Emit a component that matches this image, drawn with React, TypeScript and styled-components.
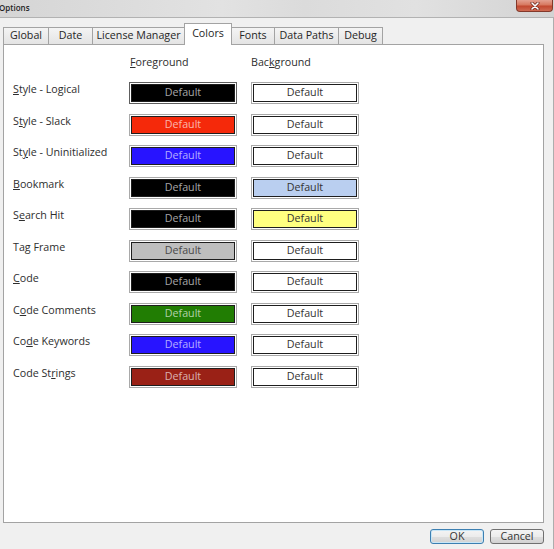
import React from "react";
import styled, { createGlobalStyle, css } from "styled-components";

const Global = createGlobalStyle`
  html, body { margin: 0; padding: 0; background: #f0f0f0; }
  body { font-family: "Open Sans", "Noto Sans", sans-serif; }
  * { box-sizing: border-box; }
`;

const Window = styled.div`
  width: 554px;
  height: 549px;
  display: flex;
  flex-direction: column;
  background: #f0f0f0;
  overflow: hidden;
`;

const TitleBar = styled.div`
  height: 18px;
  flex: none;
  display: flex;
  justify-content: space-between;
  align-items: flex-start;
  border-bottom: 1px solid #b2b2b2;
  background: linear-gradient(90deg, #d5d5d5 0%, #e2e2e2 40%, #dbdbdb 55%, #e1e1e1 75%, #d3d3d3 100%);
`;

const Title = styled.span`
  margin-left: -1px;
  font-size: 8px;
  font-weight: 600;
  line-height: 15px;
  color: #1f1f1f;
`;

const CloseButton = styled.div`
  width: 37px;
  height: 12px;
  margin-right: 1px;
  display: flex;
  align-items: center;
  justify-content: center;
  border: 1px solid #83382a;
  border-top: none;
  border-radius: 0 0 4px 4px;
  background: linear-gradient(#e4a090 0%, #d7785f 45%, #c2482f 55%, #cf6a52 100%);
`;

const Body = styled.div`
  flex: 1;
  display: flex;
  flex-direction: column;
  padding: 5px 9px 0 3px;
  border-right: 1px solid #adadad;
`;

const TabStrip = styled.div`
  height: 21px;
  display: flex;
  align-items: flex-end;
`;

const Tab = styled.div<{ $w: number; $active?: boolean }>`
  width: ${(p) => p.$w}px;
  height: 17px;
  margin-left: -1px;
  &:first-child { margin-left: 0; }
  border: 1px solid #a3a3a3;
  border-bottom: none;
  background: linear-gradient(#f4f4f4, #e4e4e4);
  font-size: 10.7px;
  line-height: 14px;
  text-align: center;
  color: #262626;
  white-space: nowrap;
  ${(p) =>
    p.$active &&
    css`
      height: 22px;
      margin-bottom: -1px;
      padding-top: 2px;
      background: #ffffff;
      position: relative;
      z-index: 1;
    `}
`;

const Panel = styled.div`
  height: 479px;
  border: 1px solid #a3a3a3;
  background: #ffffff;
  padding: 10px 0 0 9px;
`;

const Grid = styled.div`
  display: grid;
  grid-template-columns: 116px 122px 108px;
  grid-template-rows: 27px repeat(5, 32px 31px);
  align-items: start;
`;

const Header = styled.div<{ $indent?: number }>`
  padding-left: ${(p) => p.$indent ?? 0}px;
  font-size: 10.7px;
  line-height: 14px;
  color: #2e2e2e;
`;

const Label = styled.div`
  font-size: 10.7px;
  line-height: 14px;
  color: #2e2e2e;
  white-space: nowrap;
`;

const U = styled.span`
  text-decoration: underline;
  text-underline-offset: 1px;
`;

const ColorButton = styled.div<{ $focused?: boolean }>`
  width: 108px;
  height: 22px;
  padding: 1px;
  border: 1px solid ${(p) => (p.$focused ? "#5e5e5e" : "#a9a9a9")};
  background: #ffffff;
`;

const ColorFill = styled.div<{ $bg: string; $ink: string }>`
  height: 100%;
  border: 1px solid #1e1e1e;
  background: ${(p) => p.$bg};
  color: ${(p) => p.$ink};
  font-size: 10.7px;
  line-height: 14px;
  text-align: center;
`;

const Footer = styled.div`
  display: flex;
  justify-content: flex-end;
  gap: 6px;
  padding-top: 6px;
`;

const DialogButton = styled.div<{ $default?: boolean }>`
  width: 54px;
  height: 15px;
  border: 1px solid ${(p) => (p.$default ? "#3c7fb1" : "#707070")};
  border-radius: 3px;
  background: linear-gradient(#f4f4f4 0%, #ececec 50%, #dfdfdf 51%, #d2d2d2 100%);
  font-size: 10.7px;
  line-height: 13px;
  text-align: center;
  color: #333333;
  ${(p) => p.$default && css`box-shadow: inset 0 0 0 1px #c8e6f7;`}
`;

const tabs: { label: string; w: number; active?: boolean }[] = [
  { label: "Global", w: 46 },
  { label: "Date", w: 45 },
  { label: "License Manager", w: 93 },
  { label: "Colors", w: 48, active: true },
  { label: "Fonts", w: 44 },
  { label: "Data Paths", w: 65 },
  { label: "Debug", w: 45 },
];

const LIGHT_INK = "rgba(255,255,255,0.66)";
const DARK_INK = "#333333";

type Row = {
  label: [string, string, string];
  fg: string;
  fgInk: string;
  bg: string;
};

const rows: Row[] = [
  { label: ["", "S", "tyle - Logical"], fg: "#000000", fgInk: LIGHT_INK, bg: "#ffffff" },
  { label: ["S", "t", "yle - Slack"], fg: "#f5290a", fgInk: LIGHT_INK, bg: "#ffffff" },
  { label: ["St", "y", "le - Uninitialized"], fg: "#2814ff", fgInk: LIGHT_INK, bg: "#ffffff" },
  { label: ["", "B", "ookmark"], fg: "#000000", fgInk: LIGHT_INK, bg: "#bacff0" },
  { label: ["S", "e", "arch Hit"], fg: "#000000", fgInk: LIGHT_INK, bg: "#ffff80" },
  { label: ["Ta", "g", " Frame"], fg: "#bebebe", fgInk: "#4a4a4a", bg: "#ffffff" },
  { label: ["", "C", "ode"], fg: "#000000", fgInk: LIGHT_INK, bg: "#ffffff" },
  { label: ["C", "o", "de Comments"], fg: "#217d03", fgInk: LIGHT_INK, bg: "#ffffff" },
  { label: ["Co", "d", "e Keywords"], fg: "#2814ff", fgInk: LIGHT_INK, bg: "#ffffff" },
  { label: ["Code St", "r", "ings"], fg: "#9a2116", fgInk: LIGHT_INK, bg: "#ffffff" },
];

export default function App() {
  return (
    <>
      <Global />
      <Window>
        <TitleBar>
          <Title>Options</Title>
          <CloseButton>
            <svg width="10" height="8" viewBox="0 0 10 8">
              <path d="M2 1 L8 7 M8 1 L2 7" stroke="#6b2418" strokeWidth="3" strokeLinecap="round" />
              <path d="M2 1 L8 7 M8 1 L2 7" stroke="#ffffff" strokeWidth="1.6" strokeLinecap="round" />
            </svg>
          </CloseButton>
        </TitleBar>
        <Body>
          <TabStrip>
            {tabs.map((t) => (
              <Tab key={t.label} $w={t.w} $active={t.active}>
                {t.label}
              </Tab>
            ))}
          </TabStrip>
          <Panel>
            <Grid>
              <div />
              <Header $indent={1}>
                <U>F</U>oreground
              </Header>
              <Header>
                Bac<U>k</U>ground
              </Header>
              {rows.map((r, i) => (
                <React.Fragment key={i}>
                  <Label>
                    {r.label[0]}
                    <U>{r.label[1]}</U>
                    {r.label[2]}
                  </Label>
                  <ColorButton $focused={i === 0}>
                    <ColorFill $bg={r.fg} $ink={r.fgInk}>Default</ColorFill>
                  </ColorButton>
                  <ColorButton>
                    <ColorFill $bg={r.bg} $ink={DARK_INK}>Default</ColorFill>
                  </ColorButton>
                </React.Fragment>
              ))}
            </Grid>
          </Panel>
          <Footer>
            <DialogButton $default>OK</DialogButton>
            <DialogButton>Cancel</DialogButton>
          </Footer>
        </Body>
      </Window>
    </>
  );
}
